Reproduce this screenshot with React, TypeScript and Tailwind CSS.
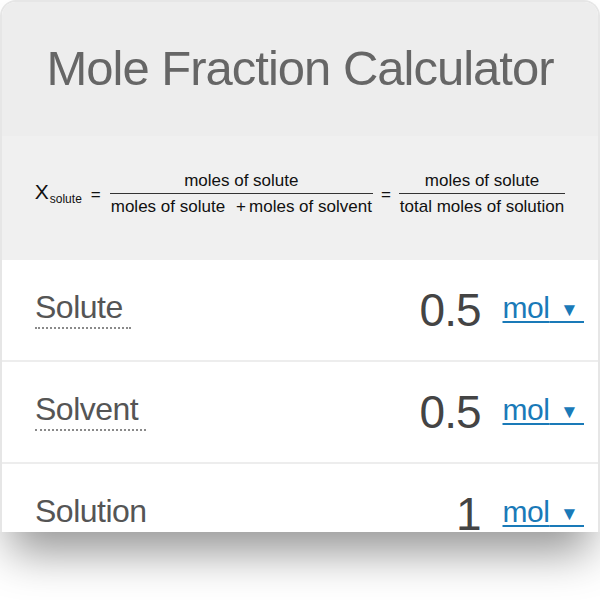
import React from "react";

interface RowProps {
  label: string;
  value: string;
  last?: boolean;
}

const Fraction = ({ top, bottom }: { top: React.ReactNode; bottom: React.ReactNode }) => (
  <div className="flex flex-col items-stretch">
    <div className="text-center leading-[20px] mb-[2px]">{top}</div>
    <div className="h-px bg-[#333]" />
    <div className="text-center leading-[20px] mt-[3px] px-[1px]">{bottom}</div>
  </div>
);

const Row = ({ label, value, last }: RowProps) => {
  return (
    <div className={`flex h-[102px] shrink-0 pl-[33px] pr-[14px] bg-white ${last ? "" : "border-b-2 border-[#ededed]"}`}>
      <div className="flex-1">
        <span
          className={`inline-block mt-[27px] text-[32px] leading-[40px] tracking-[-0.5px] text-[#555] pr-2 border-b-2 border-dotted ${
            last ? "border-transparent" : "border-[#8a8a8a]"
          }`}
        >
          {label}
        </span>
      </div>
      <div className="mt-[27px] text-[46px] leading-[46px] tracking-[-1px] text-[#444]">{value}</div>
      <div className="ml-[22px] mt-[33px] leading-[30px] text-[#1a7ab8] underline underline-offset-[3px] decoration-[2px] cursor-pointer">
        <span className="text-[30px] tracking-[-0.5px]">mol</span>
        <span className="text-[19px] align-[2px]">&nbsp;&nbsp;▼&nbsp;</span>
      </div>
    </div>
  );
};

export default function App() {
  return (
    <div className="w-[600px] h-[600px] bg-white overflow-hidden" style={{ fontFamily: '"Liberation Sans", Arial, sans-serif' }}>
      <div className="w-[600px] h-[532px] overflow-hidden rounded-t-[16px] border-2 border-b-0 border-[#e6e6e6] flex flex-col shadow-[0_30px_45px_-10px_rgba(0,0,0,0.42)]">
        <div className="h-[134px] shrink-0 bg-[#ededed] flex items-center justify-center">
          <h1 className="text-[49px] tracking-[-1px] text-[#666]">Mole Fraction Calculator</h1>
        </div>

        <div className="h-[124px] shrink-0 bg-[#f0f0f0] flex items-center justify-center text-[#111] text-[17px] pb-[8px]">
          <div className="flex items-center">
            <span className="text-[21px] leading-none -mt-[6px]">X</span>
            <span className="text-[12px] leading-none mt-[10px] ml-[1px]">solute</span>
            <span className="text-[17px] mx-[9px] leading-none">=</span>
            <Fraction
              top="moles of solute"
              bottom={
                <span>
                  moles of solute<span className="ml-[11px] mr-[3px]">+</span>moles of solvent
                </span>
              }
            />
            <span className="text-[17px] mx-[8px] leading-none">=</span>
            <Fraction top="moles of solute" bottom="total moles of solution" />
          </div>
        </div>

        <Row label="Solute" value="0.5" />
        <Row label="Solvent" value="0.5" />
        <Row label="Solution" value="1" last />
      </div>
    </div>
  );
}
